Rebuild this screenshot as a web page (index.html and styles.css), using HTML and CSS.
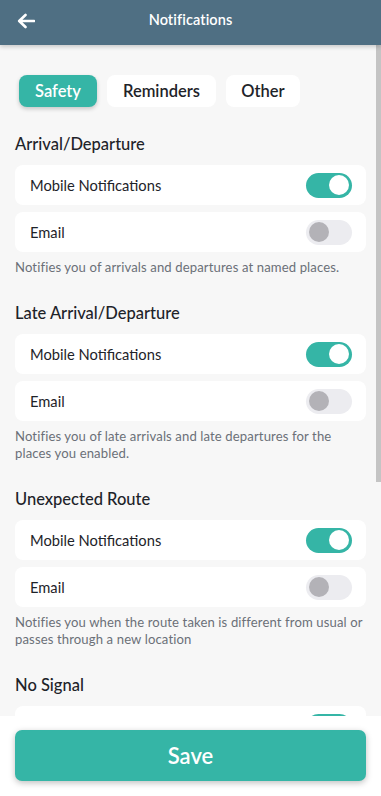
FILE: index.html
```html
<!DOCTYPE html>
<html>
<head>
<meta charset="utf-8">
<link rel="stylesheet" href="styles.css">
</head>
<body>
<div class="app">
  <header class="header">
    <svg class="back" width="18" height="16" viewBox="0 0 18 16"><path d="M17 8H2.5M8.5 2L2.2 8l6.3 6" fill="none" stroke="#fff" stroke-width="2.6" stroke-linecap="round" stroke-linejoin="round"/></svg>
    <div class="title">Notifications</div>
  </header>
  <main class="content">
    <div class="tabs">
      <div class="tab active">Safety</div>
      <div class="tab">Reminders</div>
      <div class="tab">Other</div>
    </div>

    <section class="section">
      <h2 class="sec-title">Arrival/Departure</h2>
      <div class="row"><span>Mobile Notifications</span><span class="toggle on"></span></div>
      <div class="row"><span>Email</span><span class="toggle"></span></div>
      <p class="desc">Notifies you of arrivals and departures at named places.</p>
    </section>

    <section class="section">
      <h2 class="sec-title">Late Arrival/Departure</h2>
      <div class="row"><span>Mobile Notifications</span><span class="toggle on"></span></div>
      <div class="row"><span>Email</span><span class="toggle"></span></div>
      <p class="desc">Notifies you of late arrivals and late departures for the places you enabled.</p>
    </section>

    <section class="section">
      <h2 class="sec-title">Unexpected Route</h2>
      <div class="row"><span>Mobile Notifications</span><span class="toggle on"></span></div>
      <div class="row"><span>Email</span><span class="toggle"></span></div>
      <p class="desc">Notifies you when the route taken is different from usual or passes through a new location</p>
    </section>

    <section class="section">
      <h2 class="sec-title">No Signal</h2>
      <div class="row"><span class="hidden-label"></span><span class="toggle on"></span></div>
    </section>
    <div class="scrollbar"></div>
  </main>
  <footer class="footer">
    <button class="save">Save</button>
  </footer>
</div>
</body>
</html>
```
FILE: styles.css
```css
* { box-sizing: border-box; }
html, body { margin: 0; padding: 0; }
body {
  font-family: Lato, "Noto Sans", sans-serif;
  background: #f7f7f7;
  color: #1e2329;
}
.app {
  width: 381px;
  height: 796px;
  display: flex;
  flex-direction: column;
  overflow: hidden;
}
.header {
  position: relative;
  z-index: 2;
  height: 45px;
  flex: none;
  background: #4f6f83;
  display: flex;
  align-items: center;
  justify-content: center;
  box-shadow: 0 2px 4px rgba(0,0,0,0.18);
}
.back {
  position: absolute;
  left: 17px;
  top: 13px;
}
.title {
  color: #fff;
  font-size: 14.5px;
  font-weight: 600;
  letter-spacing: 0.1px;
  margin-top: -6px;
}
.content {
  position: relative;
  flex: 1;
  overflow: hidden;
  padding: 30px 15px 0 15px;
}
.tabs {
  display: flex;
  gap: 10px;
  padding-left: 4px;
}
.tab {
  height: 32px;
  border-radius: 8px;
  background: #fff;
  display: flex;
  align-items: center;
  justify-content: center;
  font-size: 16.5px;
  font-weight: 600;
  color: #1e2329;
}
.tab:nth-child(1) { width: 78px; }
.tab:nth-child(2) { width: 109px; }
.tab:nth-child(3) { width: 74px; }
.tab.active {
  background: #35b5a6;
  color: #fff;
  box-shadow: 0 2px 4px rgba(0,0,0,0.2);
}
.section { margin-top: 26px; }
.sec-title {
  margin: 0 0 10px 0;
  font-size: 16.5px;
  font-weight: 500;
  line-height: 22px;
  color: #1e2329;
}
.row {
  height: 40px;
  background: #fff;
  border-radius: 8px;
  display: flex;
  align-items: center;
  justify-content: space-between;
  padding: 0 14px 0 15px;
  font-size: 14.7px;
  margin-bottom: 7px;
}
.toggle {
  width: 46px;
  height: 25px;
  border-radius: 13px;
  background: #ececf0;
  position: relative;
}
.toggle::after {
  content: "";
  position: absolute;
  top: 2.5px;
  left: 3px;
  width: 20px;
  height: 20px;
  border-radius: 50%;
  background: #b3b2b7;
}
.toggle.on { background: #35b5a6; }
.toggle.on::after {
  left: auto;
  right: 3px;
  background: #fff;
}
.desc {
  margin: 1px 0 0 0;
  font-size: 13.1px;
  letter-spacing: 0.12px;
  line-height: 17px;
  color: #6b7078;
}
.scrollbar {
  position: absolute;
  right: 0;
  top: 0;
  width: 5px;
  height: 437px;
  background: #c4c4c4;
}
.footer {
  position: relative;
  z-index: 2;
  height: 80px;
  flex: none;
  background: #fff;
  padding: 14px 15px 15px 15px;
}
.save {
  display: block;
  width: 100%;
  height: 51px;
  border: none;
  border-radius: 7px;
  background: #35b5a6;
  color: #fff;
  font-family: Lato, "Noto Sans", sans-serif;
  font-size: 22px;
  font-weight: 600;
  box-shadow: 0 2px 6px rgba(0,0,0,0.25);
}
```
